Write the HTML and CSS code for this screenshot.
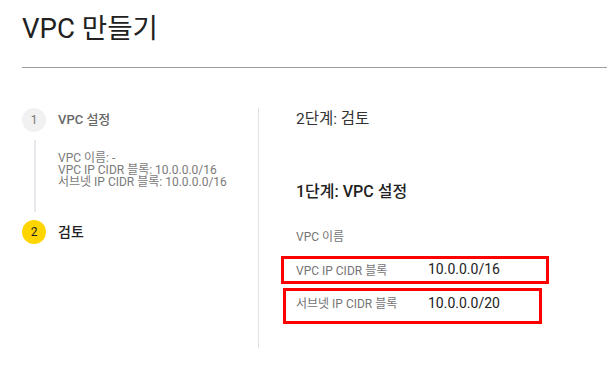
FILE: index.html
```html
<!DOCTYPE html>
<html lang="ko">
<head>
<meta charset="utf-8">
<title>VPC 만들기</title>
<link rel="stylesheet" href="styles.css">
</head>
<body>
<div class="page">
  <header class="header">
    <h1 class="title">VPC 만들기</h1>
  </header>
  <div class="wizard">
    <nav class="steps">
      <div class="step">
        <span class="badge badge-done">1</span>
        <span class="step-title step-title-done">VPC 설정</span>
        <span class="connector"><span class="connector-line"></span></span>
        <div class="step-details">
          <div>VPC 이름: -</div>
          <div>VPC IP CIDR 블록: 10.0.0.0/16</div>
          <div>서브넷 IP CIDR 블록: 10.0.0.0/16</div>
        </div>
      </div>
      <div class="step">
        <span class="badge badge-active">2</span>
        <span class="step-title step-title-active">검토</span>
      </div>
    </nav>
    <main class="content">
      <h2 class="page-step">2단계: 검토</h2>
      <h3 class="section-title">1단계: VPC 설정</h3>
      <div class="rows">
        <div class="row"><span class="label">VPC 이름</span><span class="value"></span></div>
        <div class="row"><span class="label">VPC IP CIDR 블록</span><span class="value">10.0.0.0/16</span><span class="mark mark-1"></span></div>
        <div class="row"><span class="label">서브넷 IP CIDR 블록</span><span class="value">10.0.0.0/20</span><span class="mark mark-2"></span></div>
      </div>
    </main>
  </div>
</div>
</body>
</html>
```

FILE: styles.css
```css
* { box-sizing: border-box; }
html, body { margin: 0; padding: 0; background: #fff; }
body {
  font-family: Roboto, "Noto Sans CJK KR", "Noto Sans", sans-serif;
  color: #222;
}
.page { padding-left: 22px; width: 607px; height: 383px; overflow: hidden; }

.header { padding-top: 13px; border-bottom: 1px solid #9e9e9e; height: 68px; }
.title { margin: 0; font-size: 27.6px; line-height: 32px; font-weight: 400; color: #212121; }

.wizard { display: flex; padding-top: 40px; }

.steps { width: 236px; flex: none; }
.step {
  display: grid;
  grid-template-columns: 24px 1fr;
  column-gap: 12px;
  align-items: center;
}
.badge {
  width: 24px; height: 24px; border-radius: 50%;
  display: flex; align-items: center; justify-content: center;
  font-size: 12px; line-height: 1;
}
.badge-done { background: #f1f1f1; color: #777; }
.badge-active { background: #ffd500; color: #222; }
.step-title { font-size: 13px; font-weight: 500; line-height: 20px; }
.step-title-done { color: #666; }
.step-title-active { color: #222; font-size: 14px; }

.connector { align-self: stretch; display: flex; justify-content: center; padding: 8px 0; }
.connector-line { width: 2px; margin-left: 1px; background: #e7e9ee; height: 72px; }
.step-details {
  align-self: start;
  padding-top: 20px;
  font-size: 12px; line-height: 12px; color: #7a7a7a;
}

.content {
  flex: 1;
  border-left: 1px solid #e2e2e2;
  padding-left: 37px;
  height: 240px;
}
.page-step { margin: 0; font-size: 15.5px; line-height: 22px; font-weight: 400; color: #333; }
.section-title { margin: 51px 0 0; font-size: 16px; line-height: 22px; font-weight: 500; color: #222; }

.rows { margin-top: 16px; }
.row { position: relative; display: flex; align-items: center; height: 33.5px; }
.label { width: 132px; flex: none; font-size: 12px; color: #757575; }
.value { font-size: 14px; color: #222; }

.mark { position: absolute; border: 3px solid #ff0000; pointer-events: none; }
.mark-1 { left: -15px; top: 3px; width: 268px; height: 28px; }
.mark-2 { left: -13px; top: 2px; width: 259px; height: 36px; }
```
